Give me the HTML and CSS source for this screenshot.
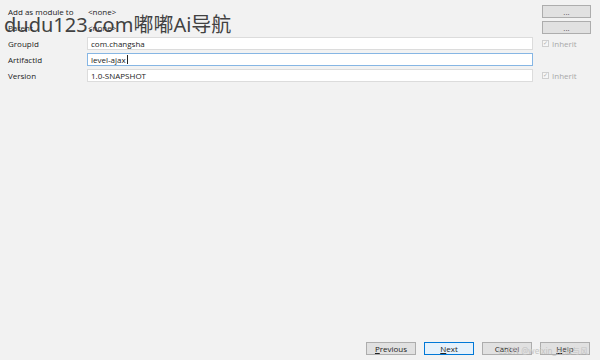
FILE: index.html
```html
<!DOCTYPE html>
<html lang="en">
<head>
<meta charset="UTF-8" />
<title>New Module</title>
<link rel="stylesheet" href="styles.css">
</head>
<body>
<div class="dialog">
	<div class="form">
		<label class="lbl">Add as module to</label>
		<span class="value">&lt;none&gt;</span>
		<button class="btn small">...</button>

		<label class="lbl">Parent</label>
		<span class="value">&lt;none&gt;</span>
		<button class="btn small">...</button>

		<label class="lbl" for="groupid">GroupId</label>
		<input type="text" id="groupid" class="field" value="com.changsha"/>
		<span class="inherit"><span class="box">&#10003;</span>Inherit</span>

		<label class="lbl" for="artifactid">ArtifactId</label>
		<div class="field focused">level-ajax<span class="caret"></span></div>
		<span></span>

		<label class="lbl" for="version">Version</label>
		<input type="text" id="version" class="field" value="1.0-SNAPSHOT"/>
		<span class="inherit"><span class="box">&#10003;</span>Inherit</span>
	</div>

	<div class="buttons">
		<button class="btn"><u>P</u>revious</button>
		<button class="btn default"><u>N</u>ext</button>
		<button class="btn">Cancel</button>
		<button class="btn"><u>H</u>elp</button>
	</div>

	<div class="watermark">dudu123.com嘟嘟Ai导航</div>
	<div class="csdn">CSDN @weixin_山海与风</div>
</div>
</body>
</html>
```

FILE: styles.css
```css
* {
	margin: 0;
	padding: 0;
	box-sizing: border-box;
}

body {
	background-color: #f2f2f2;
	font: 8px "Open Sans", "Noto Sans", sans-serif;
	color: #222;
}

.dialog {
	position: relative;
	height: 360px;
	display: flex;
	flex-direction: column;
	justify-content: space-between;
	padding: 5px 9px 5px 8px;
}

.form {
	display: grid;
	grid-template-columns: 70px 446px 49px;
	grid-auto-rows: 13px;
	row-gap: 3px;
	column-gap: 9px;
	align-items: center;
}

.lbl {
	white-space: nowrap;
	line-height: 13px;
}

.value {
	padding-left: 1px;
	line-height: 13px;
}

.field {
	height: 13px;
	width: 100%;
	padding: 0 3px;
	background-color: #fff;
	border: 1px solid #dcdcdc;
	font: 8px "Open Sans", "Noto Sans", sans-serif;
	color: #222;
	line-height: 11px;
}

.field.focused {
	border-color: #86b6e4;
}

.caret {
	display: inline-block;
	width: 1px;
	height: 9px;
	margin-left: 1px;
	vertical-align: -1px;
	background-color: #222;
}

.inherit {
	display: flex;
	align-items: center;
	gap: 3px;
	color: #a8a8a8;
}

.box {
	width: 7px;
	height: 7px;
	border: 1px solid #cfcfcf;
	background-color: #f6f6f6;
	font-size: 6px;
	line-height: 5px;
	text-align: center;
	color: #b0b0b0;
}

.btn {
	height: 13px;
	width: 50px;
	background-color: #e1e1e1;
	border: 1px solid #adadad;
	font: 8px "Open Sans", "Noto Sans", sans-serif;
	color: #222;
	line-height: 11px;
}

.btn.small {
	width: 49px;
	color: #555;
}

.btn.default {
	background-color: #e5f1fb;
	border-color: #0078d7;
}

.buttons {
	display: flex;
	justify-content: flex-end;
	gap: 8px;
	padding-right: 1px;
}

.watermark {
	position: absolute;
	left: 4px;
	top: 9px;
	font: 20px "Noto Sans", "Noto Sans CJK SC", sans-serif;
	color: #333;
	white-space: nowrap;
	opacity: 0.92;
}

.csdn {
	position: absolute;
	right: 12px;
	bottom: 4px;
	font: 8px "Noto Sans", "Noto Sans CJK SC", sans-serif;
	color: #c4c4c4;
	white-space: nowrap;
}
```
